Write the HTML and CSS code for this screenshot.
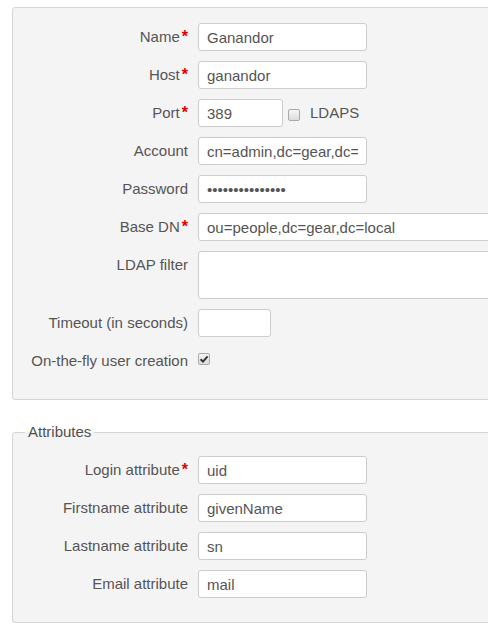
FILE: index.html
```html
<!DOCTYPE html>
<html>
<head>
<meta charset="utf-8">
<link rel="stylesheet" href="styles.css">
</head>
<body>
<form class="form">
  <div class="box">
    <div class="row"><label>Name<span class="req">*</span></label><input class="txt" type="text" value="Ganandor"></div>
    <div class="row"><label>Host<span class="req">*</span></label><input class="txt" type="text" value="ganandor"></div>
    <div class="row"><label>Port<span class="req">*</span></label><input class="txt port" type="text" value="389"><span class="cb"></span><span class="cb-label">LDAPS</span></div>
    <div class="row"><label>Account</label><input class="txt" type="text" value="cn=admin,dc=gear,dc=local"></div>
    <div class="row"><label>Password</label><input class="txt" type="password" value="abcdefghijklmno"></div>
    <div class="row"><label>Base DN<span class="req">*</span></label><input class="txt wide" type="text" value="ou=people,dc=gear,dc=local"></div>
    <div class="row"><label>LDAP filter</label><textarea class="txt wide area"></textarea></div>
    <div class="row"><label>Timeout (in seconds)</label><input class="txt timeout" type="text" value=""></div>
    <div class="row last"><label>On-the-fly user creation</label><span class="cb checked"><svg width="10" height="10" viewBox="0 0 10 10"><path d="M1.6 5.2 L4 7.6 L8.6 2.4" fill="none" stroke="#333" stroke-width="2"/></svg></span></div>
  </div>
  <fieldset class="box fs">
    <legend>Attributes</legend>
    <div class="row"><label>Login attribute<span class="req">*</span></label><input class="txt" type="text" value="uid"></div>
    <div class="row"><label>Firstname attribute</label><input class="txt" type="text" value="givenName"></div>
    <div class="row"><label>Lastname attribute</label><input class="txt" type="text" value="sn"></div>
    <div class="row last"><label>Email attribute</label><input class="txt" type="text" value="mail"></div>
  </fieldset>
</form>
</body>
</html>
```
FILE: styles.css
```css
html, body {
  margin: 0;
  padding: 0;
  background: #fff;
  overflow: hidden;
}
body {
  font-family: "Liberation Sans", Arial, sans-serif;
  font-size: 15px;
  color: #555;
}
.form {
  padding: 7px 0 0 12px;
}
.box {
  width: 540px;
  box-sizing: border-box;
  margin: 0;
  padding: 15px 0 24px 0;
  background: #f4f4f4;
  border: 1px solid #d6d6d6;
  border-radius: 3px;
}
.fs {
  margin-top: 23px;
  padding-top: 15px;
  min-width: 0;
}
.fs legend {
  margin-left: 12px;
  padding: 0 3px;
  line-height: 18px;
  color: #505050;
}
.row {
  display: flex;
  align-items: flex-start;
  margin-bottom: 10px;
}
.row.last {
  margin-bottom: 0;
}
.row label {
  width: 175px;
  flex: none;
  text-align: right;
  line-height: 28px;
  margin-right: 10px;
  white-space: nowrap;
}
.req {
  color: #e00000;
  font-weight: bold;
  margin-left: 2px;
  font-size: 16px;
}
.txt {
  box-sizing: border-box;
  height: 28px;
  width: 169px;
  padding: 0 8px;
  border: 1px solid #ccc;
  border-radius: 3px;
  background: #fff;
  font-family: "Liberation Sans", Arial, sans-serif;
  font-size: 15px;
  color: #555;
  margin: 0;
  outline: none;
}
.port { width: 85px; }
.timeout { width: 73px; }
.wide { width: 320px; }
.area {
  height: 48px;
  resize: none;
  display: block;
}
.cb {
  box-sizing: border-box;
  display: inline-flex;
  align-items: center;
  justify-content: center;
  width: 12px;
  height: 12px;
  margin-top: 10px;
  border: 1px solid #a9a9a9;
  border-radius: 2px;
  background: linear-gradient(#f6f6f6, #dcdcdc);
  flex: none;
}
.row .cb:not(.checked) {
  margin-left: 5px;
  margin-top: 10px;
}
.cb.checked {
  margin-top: 6px;
}
.cb-label {
  margin-left: 10px;
  line-height: 28px;
}
```
